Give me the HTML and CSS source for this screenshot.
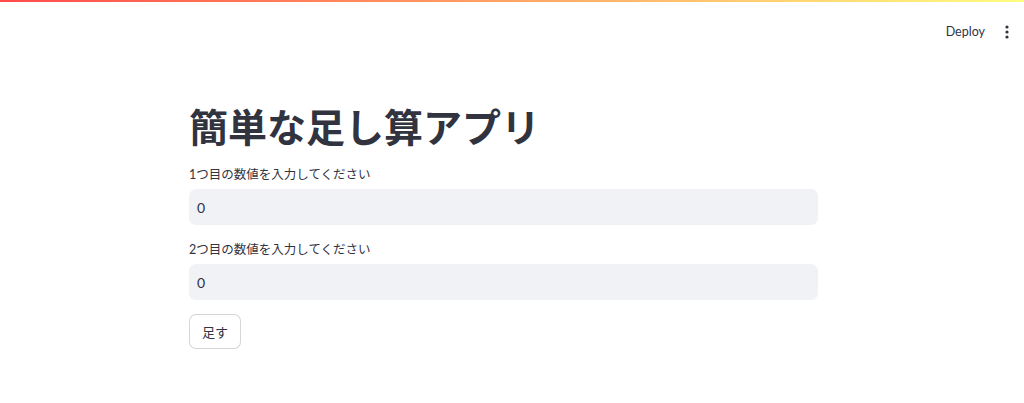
FILE: index.html
```html
<!DOCTYPE html>
<html lang="ja">
<head>
    <meta charset="UTF-8">
    <meta name="viewport" content="width=device-width, initial-scale=1.0">
    <title>簡単な足し算アプリ</title>
    <link rel="stylesheet" href="styles.css">
</head>
<body>

<div class="decoration"></div>

<header class="app-header">
    <span class="deploy">Deploy</span>
    <button class="menu-btn" aria-label="menu">
        <svg width="4" height="14" viewBox="0 0 4 14">
            <circle cx="2" cy="2" r="1.6"/>
            <circle cx="2" cy="7" r="1.6"/>
            <circle cx="2" cy="12" r="1.6"/>
        </svg>
    </button>
</header>

<main class="main-block">
    <h1 class="title">簡単な足し算アプリ</h1>

    <div class="field">
        <label class="field-label">1つ目の数値を入力してください</label>
        <div class="number-input">0</div>
    </div>

    <div class="field">
        <label class="field-label">2つ目の数値を入力してください</label>
        <div class="number-input">0</div>
    </div>

    <button class="add-btn">足す</button>
</main>

</body>
</html>
```

FILE: styles.css
```css
/* ベース */
body {
    margin: 0;
    padding: 0;
    background-color: #fff;
    color: rgb(49, 51, 63);
    font-family: "Lato", "Noto Sans CJK JP", sans-serif;
}

/* 上部のグラデーション */
.decoration {
    height: 2px;
    background: linear-gradient(90deg, rgb(255, 75, 75), rgb(255, 253, 128));
}

.app-header {
    height: 61px;
    display: flex;
    justify-content: flex-end;
    align-items: center;
    padding-right: 12px;
    gap: 17px;
    box-sizing: border-box;
    padding-bottom: 2px;
}

.deploy {
    font-size: 12.5px;
    color: rgb(49, 51, 63);
}

.menu-btn {
    border: none;
    background: none;
    padding: 0;
    width: 10px;
    display: flex;
    justify-content: center;
    fill: rgb(49, 51, 63);
}

/* メイン */
.main-block {
    width: 629px;
    margin-left: 189px;
    padding-top: 41px;
}

.title {
    margin: 0 0 15px;
    font-size: 39px;
    line-height: 47px;
    font-weight: 700;
}

.field {
    margin-bottom: 16px;
}

.field-label {
    display: block;
    font-size: 12.5px;
    line-height: 18px;
    margin-bottom: 5px;
}

.number-input {
    height: 36px;
    background-color: rgb(240, 242, 246);
    border-radius: 7px;
    padding-left: 8px;
    display: flex;
    align-items: center;
    font-size: 14px;
}

.add-btn {
    height: 35px;
    width: 52px;
    padding: 0;
    font-family: inherit;
    font-size: 13px;
    color: rgb(49, 51, 63);
    background-color: #fff;
    border: 1px solid rgba(49, 51, 63, 0.2);
    border-radius: 7px;
    margin-top: -2px;
}
```
